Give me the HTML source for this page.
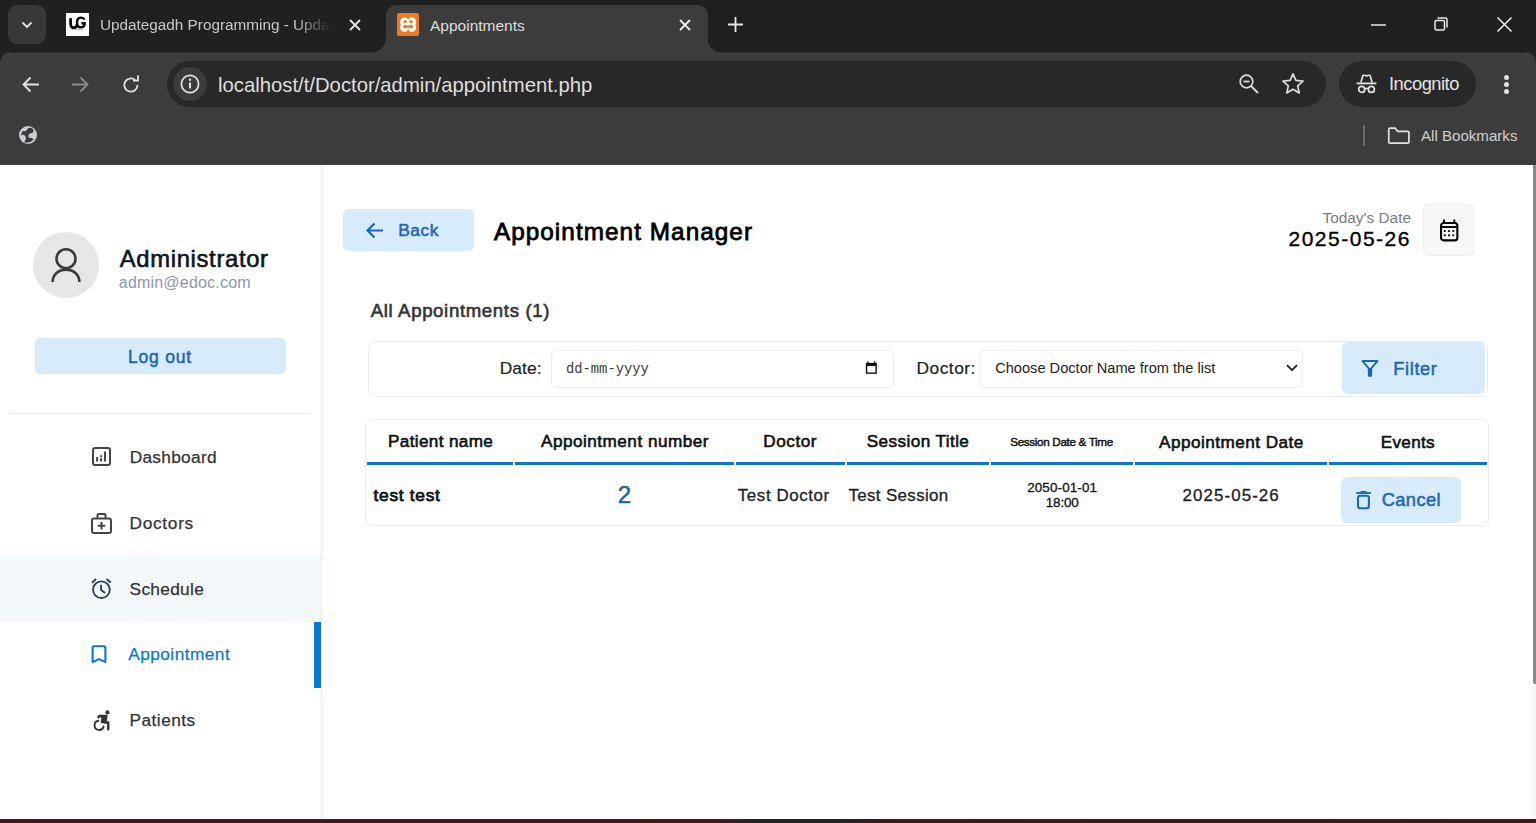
<!DOCTYPE html>
<html><head><meta charset="utf-8">
<style>
*{box-sizing:border-box;margin:0;padding:0}
html,body{width:1536px;height:823px;overflow:hidden;background:#fff;font-family:"Liberation Sans",sans-serif}
.a{position:absolute}
.t{position:absolute;white-space:nowrap;line-height:1}
svg{position:absolute;overflow:visible}
/* chrome */
#strip{left:0;top:0;width:1536px;height:70px;background:#1f2020}
#toolbar{left:0;top:52px;width:1536px;height:113px;background:#3c3c3c;border-radius:10px 10px 0 0}
#page{left:0;top:165px;width:1536px;height:654px;background:#fff}
#taskbar{left:0;top:819px;width:1536px;height:4px;background:linear-gradient(90deg,#441a17 0,#431a19 720px,#242323 760px,#242323 840px,#3e1a18 880px,#3d1b18 1536px)}
</style></head>
<body>
<!-- ===== TAB STRIP ===== -->
<div id="strip" class="a"></div>
<div class="a" style="left:8px;top:5px;width:38px;height:39px;border-radius:9px;background:#383838"></div>
<svg style="left:20px;top:18px" width="14" height="14" viewBox="0 0 14 14"><path d="M2.5 4.5 L7 9 L11.5 4.5" fill="none" stroke="#e3e3e3" stroke-width="1.8"/></svg>
<!-- inactive tab -->
<div class="a" style="left:66px;top:13px;width:23px;height:23px;background:#fff"></div>
<svg style="left:66px;top:13px" width="23" height="23" viewBox="0 0 23 23"><path d="M4.6 5.2V10.6Q4.6 14.8 7.9 14.8Q10.6 14.8 11 11.5" fill="none" stroke="#000" stroke-width="2.7"/><path d="M18.6 6.6Q17.3 4.6 15 4.6Q11 4.6 11 9.6Q11 14.4 14.8 14.4Q18.6 14.4 18.6 10.3H15.4" fill="none" stroke="#000" stroke-width="2.4"/><path d="M5 16.4H16.5" stroke="#bbb" stroke-width="1"/></svg>
<div class="t" style="left:100px;top:17px;font-size:15.3px;color:#c8c8c8;width:230px;height:22px;overflow:hidden;-webkit-mask-image:linear-gradient(90deg,#000 85%,transparent)">Updategadh Programming - Updategadh</div>
<svg style="left:349px;top:19px" width="12" height="12" viewBox="0 0 12 12"><path d="M1 1L11 11M11 1L1 11" stroke="#e8e8e8" stroke-width="1.8"/></svg>
<!-- active tab -->
<div class="a" style="left:386px;top:5px;width:322px;height:47px;background:#3c3c3c;border-radius:10px 10px 0 0"></div>
<div class="a" style="left:372px;top:39px;width:14px;height:13px;background:radial-gradient(circle at 0 0,#1f2020 13px,#3c3c3c 13.7px)"></div>
<div class="a" style="left:707px;top:39px;width:14px;height:13px;background:radial-gradient(circle at 100% 0,#1f2020 13px,#3c3c3c 13.7px)"></div>
<div class="a" style="left:397px;top:13px;width:22px;height:23px;background:#f07b24;border-radius:2px"></div>
<svg style="left:397px;top:13px" width="22" height="23" viewBox="0 0 22 23"><g fill="#fff"><circle cx="7.6" cy="9" r="4.6"/><circle cx="14.6" cy="9" r="4.6"/><circle cx="7.6" cy="14.3" r="4.6"/><circle cx="14.6" cy="14.3" r="4.6"/><rect x="7.6" y="7" width="7" height="9"/></g><g fill="#f07b24"><circle cx="8.2" cy="8.6" r="1.7"/><circle cx="14" cy="8.6" r="1.7"/><circle cx="8" cy="13.6" r="1.9"/><circle cx="14.2" cy="13.6" r="1.9"/><rect x="8" y="12.4" width="6.2" height="2.4"/></g><path d="M11.1 2.5V6.2M11.1 16.8V21" stroke="#f07b24" stroke-width="1.6"/></svg>
<div class="t" style="left:430px;top:17.5px;font-size:15.5px;color:#dedede">Appointments</div>
<svg style="left:679px;top:19px" width="12" height="12" viewBox="0 0 12 12"><path d="M1 1L11 11M11 1L1 11" stroke="#f0f0f0" stroke-width="1.8"/></svg>
<svg style="left:728px;top:17px" width="15" height="15" viewBox="0 0 15 15"><path d="M7.5 0V15M0 7.5H15" stroke="#e8e8e8" stroke-width="1.8"/></svg>
<!-- window controls -->
<svg style="left:1371px;top:24px" width="15" height="2" viewBox="0 0 15 2"><path d="M0 1H15" stroke="#e8e8e8" stroke-width="1.5"/></svg>
<svg style="left:1434px;top:17px" width="14" height="14" viewBox="0 0 14 14"><rect x="1" y="3.5" width="9.5" height="9.5" rx="1.5" fill="none" stroke="#e8e8e8" stroke-width="1.5"/><path d="M3.5 1H11.5Q13 1 13 2.5V10.5" fill="none" stroke="#e8e8e8" stroke-width="1.5"/></svg>
<svg style="left:1497px;top:17px" width="15" height="15" viewBox="0 0 15 15"><path d="M0.5 0.5L14.5 14.5M14.5 0.5L0.5 14.5" stroke="#e8e8e8" stroke-width="1.6"/></svg>

<!-- ===== TOOLBAR ===== -->
<div id="toolbar" class="a"></div>
<div class="a" style="left:10px;top:52px;width:362px;height:1px;background:#2e2e2e"></div><div class="a" style="left:721px;top:52px;width:805px;height:1px;background:#2e2e2e"></div>
<svg style="left:22px;top:76px" width="18" height="17" viewBox="0 0 18 17"><path d="M17 8.5H2M8.5 1.5L1.5 8.5L8.5 15.5" fill="none" stroke="#e3e3e3" stroke-width="1.8"/></svg>
<svg style="left:71px;top:76px" width="18" height="17" viewBox="0 0 18 17"><path d="M1 8.5H16M9.5 1.5L16.5 8.5L9.5 15.5" fill="none" stroke="#8a8a8a" stroke-width="1.8"/></svg>
<svg style="left:122px;top:76px" width="18" height="18" viewBox="0 0 18 18"><path d="M15.5 9A6.6 6.6 0 1 1 13.2 4" fill="none" stroke="#e3e3e3" stroke-width="1.8"/><path d="M11 4.6H16V-0.4" fill="none" stroke="#e3e3e3" stroke-width="1.8"/></svg>
<div class="a" style="left:167px;top:61px;width:1159px;height:46px;border-radius:23px;background:#282828"></div>
<div class="a" style="left:173px;top:67px;width:34px;height:34px;border-radius:17px;background:#3c3c3c"></div>
<svg style="left:180px;top:74px" width="20" height="20" viewBox="0 0 20 20"><circle cx="10" cy="10" r="8.6" fill="none" stroke="#e3e3e3" stroke-width="1.7"/><path d="M10 8.5V14.5" stroke="#e3e3e3" stroke-width="2"/><circle cx="10" cy="5.8" r="1.2" fill="#e3e3e3"/></svg>
<div class="t" style="left:218px;top:75px;font-size:20.3px;color:#dedede">localhost/t/Doctor/admin/appointment.php</div>
<svg style="left:1239px;top:74px" width="20" height="20" viewBox="0 0 20 20"><circle cx="7.5" cy="7.5" r="6.3" fill="none" stroke="#dcdcdc" stroke-width="1.7"/><path d="M4.5 7.5H10.5" stroke="#dcdcdc" stroke-width="1.8"/><path d="M12 12L19 19" stroke="#dcdcdc" stroke-width="1.8"/></svg>
<svg style="left:1282px;top:73px" width="22" height="22" viewBox="0 0 22 22"><path d="M11.00 0.83L13.88 7.44L21.05 8.13L15.66 12.91L17.21 19.95L11.00 16.30L4.79 19.95L6.34 12.91L0.95 8.13L8.12 7.44Z" fill="none" stroke="#dcdcdc" stroke-width="1.7" stroke-linejoin="round"/></svg>
<div class="a" style="left:1339px;top:61px;width:137px;height:46px;border-radius:23px;background:#282828"></div>
<svg style="left:1356px;top:74px" width="21" height="20" viewBox="0 0 21 20"><path d="M4.9 8.6L6.9 1.6Q8.6 0.8 10.5 1.9Q12.4 0.8 14.1 1.6L16.1 8.6" fill="none" stroke="#e3e3e3" stroke-width="1.7" stroke-linejoin="round"/><path d="M0.6 9.4H20.4" stroke="#e3e3e3" stroke-width="1.8"/><circle cx="5.7" cy="15.4" r="3" fill="none" stroke="#e3e3e3" stroke-width="1.7"/><circle cx="15.4" cy="15.4" r="3" fill="none" stroke="#e3e3e3" stroke-width="1.7"/><path d="M8.6 14.9Q10.5 13.8 12.5 14.9" fill="none" stroke="#e3e3e3" stroke-width="1.6"/></svg>
<div class="t" style="left:1389px;top:75px;font-size:18.3px;letter-spacing:-0.48px;color:#e3e3e3">Incognito</div>
<div class="a" style="left:1504px;top:75px;width:5px;height:5px;border-radius:50%;background:#e3e3e3"></div>
<div class="a" style="left:1504px;top:82px;width:5px;height:5px;border-radius:50%;background:#e3e3e3"></div>
<div class="a" style="left:1504px;top:89px;width:5px;height:5px;border-radius:50%;background:#e3e3e3"></div>
<!-- bookmarks bar -->
<svg style="left:18px;top:125px" width="20" height="20" viewBox="0 0 20 20"><circle cx="10" cy="10" r="9" fill="#c8cdd6"/><path d="M3 11C5 8 8 11 8 13C8 15 6 16 6.5 17.5C9 18 13 17.5 15.5 14.5C14 12 11.5 14 10.5 11.5C10 9.5 12.5 8 14 8C15.5 8 16 6 15 4C13 2 10 2.5 9.5 4C9 5.5 7.5 6.5 6 6C4.5 5.5 3.5 7 3 11Z" fill="#3c3c3c"/></svg>
<div class="a" style="left:1363px;top:125px;width:2px;height:21px;background:#6a6a6a"></div>
<svg style="left:1387px;top:127px" width="23" height="18" viewBox="0 0 23 18"><path d="M1.75 2.5Q1.75 1.2 3 1.2H8.2L10.6 4.3H20.7Q21.95 4.3 21.95 5.5V14.9Q21.95 16.1 20.7 16.1H3Q1.75 16.1 1.75 14.9Z" fill="none" stroke="#e0e0e0" stroke-width="1.75" stroke-linejoin="round"/></svg>
<div class="t" style="left:1421px;top:127.5px;font-size:15.1px;color:#d0d0d0">All Bookmarks</div>

<!-- ===== PAGE ===== -->
<div id="page" class="a"></div>
<!-- sidebar -->
<div class="a" style="left:321px;top:165px;width:1px;height:654px;background:#ececec"></div>
<div class="a" style="left:33px;top:232px;width:66px;height:66px;border-radius:50%;background:#e6e6e6"></div>
<svg style="left:50px;top:247px" width="32" height="36" viewBox="0 0 32 36"><circle cx="16" cy="11.7" r="9.5" fill="none" stroke="#3a3a3a" stroke-width="2.6"/><path d="M2.6 35C2.6 27.5 8.6 22.6 16 22.6S29.4 27.5 29.4 35" fill="none" stroke="#3a3a3a" stroke-width="2.6"/></svg>
<div class="t" style="left:119.8px;top:246.7px;font-size:23.8px;color:#0d1522;letter-spacing:0.67px;-webkit-text-stroke:0.6px #0d1522">Administrator</div>
<div class="t" style="left:118.8px;top:274.7px;font-size:16px;color:#8a98ae;letter-spacing:0.2px">admin@edoc.com</div>
<div class="a" style="left:35px;top:338px;width:251px;height:36px;border-radius:5px;background:#d8ebfa"></div>
<div class="t" style="left:128.0px;top:348.6px;font-size:17.5px;color:#1c66ba;letter-spacing:0.77px;-webkit-text-stroke:0.5px #1c66ba">Log out</div>
<div class="a" style="left:10px;top:413px;width:301px;height:1px;background:#ebebeb"></div>

<div class="a" style="left:0;top:556px;width:321px;height:66px;background:#f3f8fb"></div>
<div class="a" style="left:314px;top:622px;width:7px;height:66px;background:#0a76d8"></div>

<svg style="left:92px;top:447px" width="19" height="19" viewBox="0 0 19 19"><rect x="1" y="1" width="17" height="17" rx="2" fill="none" stroke="#444" stroke-width="2"/><path d="M5.1 10V14.6M9.1 8.2V10M9.1 11.2V14.6M13.05 4.5V14.6" stroke="#444" stroke-width="2"/></svg>
<div class="t" style="left:129.7px;top:449.1px;font-size:17.3px;color:#333;letter-spacing:0.29px;-webkit-text-stroke:0.25px #333">Dashboard</div>
<svg style="left:91px;top:513px" width="21" height="21" viewBox="0 0 21 21"><rect x="1" y="5.5" width="19" height="14.5" rx="2" fill="none" stroke="#444" stroke-width="2"/><path d="M6.5 5.5V2Q6.5 1 7.5 1H13.5Q14.5 1 14.5 2V5.5" fill="none" stroke="#444" stroke-width="2"/><path d="M10.5 9V16.5M6.75 12.75H14.25" stroke="#444" stroke-width="2"/></svg>
<div class="t" style="left:129.6px;top:514.8px;font-size:17.3px;color:#333;letter-spacing:0.68px;-webkit-text-stroke:0.25px #333">Doctors</div>
<svg style="left:91px;top:578px" width="21" height="22" viewBox="0 0 21 22"><circle cx="10.4" cy="11.7" r="8.35" fill="none" stroke="#2f435a" stroke-width="1.9"/><path d="M10.1 6.7V12.1L14.2 15" fill="none" stroke="#2f435a" stroke-width="1.9"/><path d="M0.9 4.7L5.1 1.1M15.5 0.9L19.8 4.5" stroke="#2f435a" stroke-width="2"/></svg>
<div class="t" style="left:129.6px;top:580.5px;font-size:17.3px;color:#333;letter-spacing:0.3px;-webkit-text-stroke:0.25px #333">Schedule</div>
<svg style="left:91px;top:645px" width="16" height="19" viewBox="0 0 16 19"><path d="M1.6 17.1V2.7Q1.6 1.2 3.1 1.2H12.9Q14.4 1.2 14.4 2.7V17.1L8 14.1Z" fill="none" stroke="#0a76d8" stroke-width="2.1" stroke-linejoin="round"/></svg>
<div class="t" style="left:128.2px;top:646.2px;font-size:17.3px;color:#0a76d8;letter-spacing:0.45px;-webkit-text-stroke:0.25px #0a76d8">Appointment</div>
<svg style="left:88px;top:704px" width="28" height="32" viewBox="0 0 28 32"><circle cx="19.45" cy="8.4" r="2.15" fill="#333"/><path d="M10.4 16.8A4.6 4.6 0 1 0 15.64 22.5" fill="none" stroke="#333" stroke-width="1.9" stroke-linecap="round"/><path d="M10.4 13.2L11.7 11.9H18.4L17.3 18.6H20.2V25.2" fill="none" stroke="#333" stroke-width="2.5" stroke-linejoin="round" stroke-linecap="round"/><path d="M13.3 11.7H18.9L17.6 19.2H12.9Z" fill="#333"/></svg>
<div class="t" style="left:129.6px;top:712.0px;font-size:17.3px;color:#333;letter-spacing:0.44px;-webkit-text-stroke:0.25px #333">Patients</div>

<!-- header -->
<div class="a" style="left:343px;top:209px;width:131px;height:42px;border-radius:6px;background:#d8ebfa"></div>
<svg style="left:366px;top:222px" width="18" height="17" viewBox="0 0 18 17"><path d="M17 8.5H2M8.5 1.5L1.5 8.5L8.5 15.5" fill="none" stroke="#1c66ba" stroke-width="2.2"/></svg>
<div class="t" style="left:398.3px;top:222.0px;font-size:17.3px;color:#1c66ba;letter-spacing:0.53px;-webkit-text-stroke:0.5px #1c66ba">Back</div>
<div class="t" style="left:493.9px;top:219.6px;font-size:24.3px;color:#000;letter-spacing:1.06px;-webkit-text-stroke:0.8px #000">Appointment Manager</div>
<div class="t" style="left:1322.5px;top:210px;font-size:15.4px;color:#7d7d7d">Today's Date</div>
<div class="t" style="left:1288.5px;top:227.5px;font-size:21px;color:#000;letter-spacing:1.5px;-webkit-text-stroke:0.35px #000">2025-05-26</div>
<div class="a" style="left:1423px;top:204px;width:51px;height:52px;border-radius:6px;background:#f7f8fa;border:1px solid #edf0f3"></div>
<svg style="left:1440px;top:219px" width="19" height="22" viewBox="0 0 19 22"><path d="M3.9 0.6V4.5M14.3 0.6V4.5" stroke="#000" stroke-width="2"/><rect x="1.05" y="3.95" width="16.3" height="17.4" rx="2.6" fill="none" stroke="#000" stroke-width="2.1"/><path d="M1.05 8H17.35" stroke="#000" stroke-width="2"/><g fill="#000"><circle cx="4.8" cy="12.1" r="1.1"/><circle cx="9" cy="12.1" r="1.1"/><circle cx="13.3" cy="12.1" r="1.1"/><circle cx="4.8" cy="16.3" r="1.1"/><circle cx="9" cy="16.3" r="1.1"/><circle cx="13.3" cy="16.3" r="1.1"/></g></svg>

<div class="t" style="left:370.7px;top:301.9px;font-size:18.6px;color:#333;letter-spacing:0.65px;-webkit-text-stroke:0.6px #333">All Appointments (1)</div>

<!-- filter -->
<div class="a" style="left:368px;top:341px;width:1120px;height:56px;border-radius:8px;border:1px solid #ebebeb"></div>
<div class="t" style="left:499.7px;top:360.4px;font-size:17.4px;color:#222;letter-spacing:0.1px;-webkit-text-stroke:0.2px #222">Date:</div>
<div class="a" style="left:551px;top:350px;width:343px;height:38px;border-radius:5px;border:1px solid #ebedf0"></div>
<div class="t" style="left:566px;top:363px;font-family:'Liberation Mono';font-size:13.8px;color:#3a3a3a">dd-mm-yyyy</div>
<svg style="left:865px;top:361px" width="13" height="13" viewBox="0 0 13 13"><path d="M3 0.4V2.6M9.6 0.4V2.6" stroke="#111" stroke-width="1.3"/><rect x="1.55" y="2.55" width="9.6" height="9.6" fill="none" stroke="#111" stroke-width="1.4"/><path d="M1.55 3.8H11.15" stroke="#111" stroke-width="2.4"/></svg>
<div class="t" style="left:916.5px;top:360.2px;font-size:17.4px;color:#222;letter-spacing:0.48px;-webkit-text-stroke:0.2px #222">Doctor:</div>
<div class="a" style="left:979px;top:350px;width:324px;height:38px;border-radius:5px;border:1px solid #ebedf0"></div>
<div class="t" style="left:995.2px;top:361.2px;font-size:14.6px;color:#222;letter-spacing:0.01px">Choose Doctor Name from the list</div>
<svg style="left:1286px;top:364px" width="12" height="8" viewBox="0 0 12 8"><path d="M1 1.2L6 6.2L11 1.2" fill="none" stroke="#222" stroke-width="1.8"/></svg>
<div class="a" style="left:1342px;top:342px;width:143px;height:52px;border-radius:6px;background:#d8ebfa"></div>
<svg style="left:1361px;top:360px" width="18" height="18" viewBox="0 0 18 18"><path d="M1.6 1.05H16.4L9 9.8Z" fill="none" stroke="#1c66ba" stroke-width="1.9" stroke-linejoin="round"/><rect x="6.9" y="8.6" width="4.2" height="8.1" rx="0.7" fill="#1c66ba"/></svg>
<div class="t" style="left:1393.3px;top:359.6px;font-size:18.2px;color:#1c66ba;letter-spacing:0.64px;-webkit-text-stroke:0.5px #1c66ba">Filter</div>

<!-- table -->
<div class="a" style="left:365px;top:419px;width:1124px;height:107px;border-radius:7px;border:1px solid #ebebeb"></div>
<div class="a" style="left:367px;top:462px;width:146px;height:3px;background:#0a76d8"></div>
<div class="a" style="left:515px;top:462px;width:219px;height:3px;background:#0a76d8"></div>
<div class="a" style="left:736px;top:462px;width:109px;height:3px;background:#0a76d8"></div>
<div class="a" style="left:847px;top:462px;width:142px;height:3px;background:#0a76d8"></div>
<div class="a" style="left:991px;top:462px;width:142px;height:3px;background:#0a76d8"></div>
<div class="a" style="left:1135px;top:462px;width:192px;height:3px;background:#0a76d8"></div>
<div class="a" style="left:1329px;top:462px;width:158px;height:3px;background:#0a76d8"></div>

<div class="t" style="left:388.1px;top:433.1px;font-size:17.15px;color:#111;letter-spacing:0.34px;-webkit-text-stroke:0.6px #111">Patient name</div>
<div class="t" style="left:541.0px;top:433.3px;font-size:17.15px;color:#111;letter-spacing:0.49px;-webkit-text-stroke:0.6px #111">Appointment number</div>
<div class="t" style="left:763.3px;top:433.4px;font-size:17.15px;color:#111;letter-spacing:0.54px;-webkit-text-stroke:0.6px #111">Doctor</div>
<div class="t" style="left:866.7px;top:433.4px;font-size:17.15px;color:#111;letter-spacing:0.42px;-webkit-text-stroke:0.6px #111">Session Title</div>
<div class="t" style="left:1010.2px;top:435.9px;font-size:11.7px;color:#111;letter-spacing:-0.34px;-webkit-text-stroke:0.45px #111">Session Date &amp; Time</div>
<div class="t" style="left:1159.0px;top:434.0px;font-size:17.15px;color:#111;letter-spacing:0.47px;-webkit-text-stroke:0.6px #111">Appointment Date</div>
<div class="t" style="left:1380.8px;top:433.5px;font-size:17.15px;color:#111;letter-spacing:0.28px;-webkit-text-stroke:0.6px #111">Events</div>

<div class="t" style="left:373.5px;top:487.0px;font-size:17.4px;color:#111;letter-spacing:0.69px;-webkit-text-stroke:0.75px #111">test test</div>
<div class="t" style="left:617.8px;top:482.8px;font-size:24px;color:#1f5fb5;-webkit-text-stroke:0.55px #1f5fb5">2</div>
<div class="t" style="left:737.8px;top:488.0px;font-size:16.9px;color:#222;letter-spacing:0.6px;-webkit-text-stroke:0.3px #222">Test Doctor</div>
<div class="t" style="left:848.5px;top:488.0px;font-size:16.9px;color:#222;letter-spacing:0.36px;-webkit-text-stroke:0.3px #222">Test Session</div>
<div class="t" style="left:1027.2px;top:481.0px;font-size:13.4px;color:#111;letter-spacing:0.14px;-webkit-text-stroke:0.3px #111">2050-01-01</div>
<div class="t" style="left:1045.8px;top:496.0px;font-size:13.4px;color:#111;letter-spacing:-0.15px;-webkit-text-stroke:0.3px #111">18:00</div>
<div class="t" style="left:1182.6px;top:488.3px;font-size:16.9px;color:#222;letter-spacing:1.08px;-webkit-text-stroke:0.3px #222">2025-05-26</div>
<div class="a" style="left:1341px;top:477px;width:120px;height:46px;border-radius:6px;background:#d8ebfa"></div>
<svg style="left:1356px;top:490px" width="15" height="20" viewBox="0 0 15 20"><path d="M0.3 3H14.8" stroke="#1c66ba" stroke-width="1.9"/><path d="M5.2 1.7H9.8" stroke="#1c66ba" stroke-width="1.6" stroke-linecap="round"/><rect x="2" y="5.8" width="10.9" height="12.5" rx="2.2" fill="none" stroke="#1c66ba" stroke-width="2.1"/></svg>
<div class="t" style="left:1381.7px;top:490.9px;font-size:18.3px;color:#1c66ba;letter-spacing:0.4px;-webkit-text-stroke:0.5px #1c66ba">Cancel</div>

<!-- scrollbar -->
<div class="a" style="left:1533px;top:165px;width:3px;height:519px;background:#8a8a8a;border-radius:0 0 0 2px"></div>
<div class="a" style="left:1533px;top:684px;width:3px;height:135px;background:#f6f6f6"></div>
<div id="taskbar" class="a"></div>
</body></html>
